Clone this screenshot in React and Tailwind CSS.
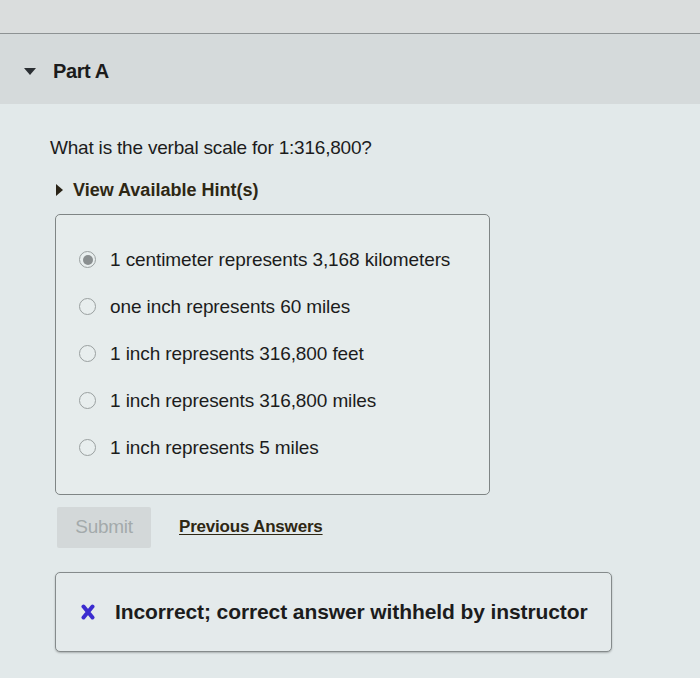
import { useState } from "react";

const choices = [
  "1 centimeter represents 3,168 kilometers",
  "one inch represents 60 miles",
  "1 inch represents 316,800 feet",
  "1 inch represents 316,800 miles",
  "1 inch represents 5 miles",
];

function Radio({ checked }) {
  return (
    <span className="w-[17px] h-[17px] rounded-full border border-[#9aa0a0] bg-[#e8eeee] flex items-center justify-center shrink-0">
      {checked && <span className="w-[10px] h-[10px] rounded-full bg-[#8a8f90]" />}
    </span>
  );
}

export default function App() {
  const [picked, setPicked] = useState(0);

  return (
    <div className="w-[700px] h-[678px] overflow-hidden bg-[#e2e9ea] text-[#1c1c1c] font-['Liberation_Sans',Arial,sans-serif]">
      {/* top strip */}
      <div className="h-[34px] bg-[#dadddd] border-b border-[#8d9293]" />

      {/* part header */}
      <div className="h-[70px] bg-[#d5dadb] flex items-center pl-[24px] pt-[4px]">
        <span className="w-0 h-0 border-l-[6px] border-r-[6px] border-t-[7px] border-l-transparent border-r-transparent border-t-[#2b2f33]" />
        <span className="ml-[17px] text-[20px] font-bold tracking-[-0.4px]">Part A</span>
      </div>

      <div className="pl-[50px] pt-[30px]">
        <p className="text-[19px] tracking-[-0.2px]">What is the verbal scale for 1:316,800?</p>

        <div className="mt-[14px] ml-[6px] flex items-center">
          <span className="w-0 h-0 border-t-[6px] border-b-[6px] border-l-[7px] border-t-transparent border-b-transparent border-l-[#2a2418]" />
          <span className="ml-[10px] text-[18px] font-bold text-[#2e2714]">View Available Hint(s)</span>
        </div>

        {/* answer choices */}
        <div className="mt-[10px] ml-[5px] w-[435px] h-[281px] rounded-[5px] border border-[#7f8585] bg-[#e6ecec] pl-[23px] pt-[34px] flex flex-col gap-[25px]">
          {choices.map((c, i) => (
            <label key={c} className="flex items-center gap-[14px] cursor-pointer" onClick={() => setPicked(i)}>
              <Radio checked={picked === i} />
              <span className="text-[19px] leading-[22px] tracking-[-0.1px]">{c}</span>
            </label>
          ))}
        </div>

        <div className="mt-[12px] ml-[7px] flex items-center">
          <button className="w-[94px] h-[41px] rounded-[2px] bg-[#d3d8d9] text-[#a3aaab] text-[19px] tracking-[-0.3px]">Submit</button>
          <a className="ml-[28px] text-[17px] font-bold underline underline-offset-2 text-[#2e2714] tracking-[-0.2px]">Previous Answers</a>
        </div>

        {/* feedback */}
        <div className="mt-[24px] ml-[5px] w-[557px] h-[80px] rounded-[5px] border border-[#858b8c] bg-[#e4eaeb] shadow-[0_1px_2px_rgba(0,0,0,0.25)] flex items-center pl-[25px] gap-[20px]">
          <svg width="14" height="16" viewBox="0 0 14 16">
            <path d="M2.5 2.5 L11.5 13.5 M11.5 2.5 L2.5 13.5" stroke="#3b2ccf" strokeWidth="4" strokeLinecap="round" />
          </svg>
          <span className="text-[21px] font-bold tracking-[-0.1px]">Incorrect; correct answer withheld by instructor</span>
        </div>
      </div>
    </div>
  );
}
